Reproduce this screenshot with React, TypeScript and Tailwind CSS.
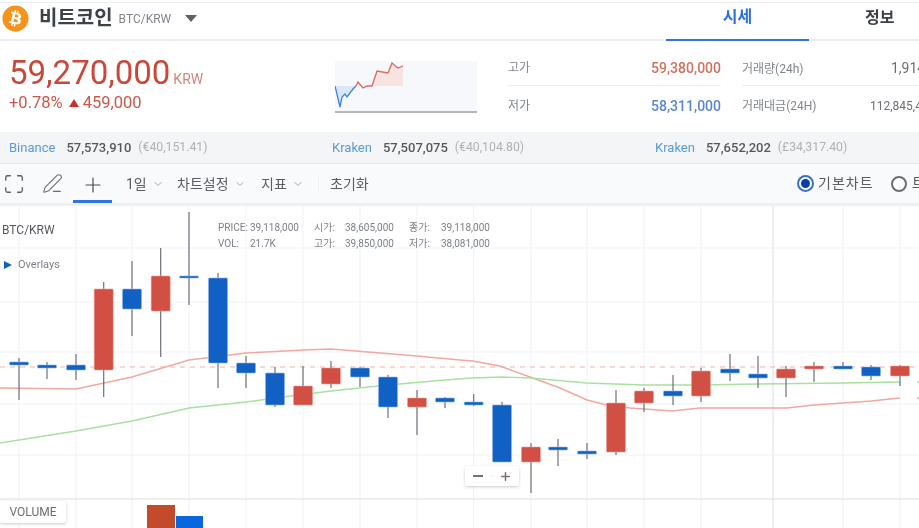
import { ChevronDown, Maximize, PenLine, Plus } from 'lucide-react';
import { FaBitcoin } from 'react-icons/fa';

const FONT = "font-['Roboto','Noto_Sans_CJK_KR',sans-serif]";

const RED = '#d14f43';
const BLUE = '#1160c4';

// x, bodyTop, bodyBottom, wickTop, wickBottom, up
const candles: [number, number, number, number, number, boolean][] = [
  [19, 362, 365, 358, 400, false],
  [47, 365, 368, 362, 379, false],
  [76, 365, 370, 354, 380, false],
  [103.7, 289, 370, 282, 397, true],
  [132, 289, 309, 261, 336, false],
  [160.7, 276, 311, 248, 357, true],
  [189, 276, 278, 212, 305, false],
  [218, 278, 363, 273, 388, false],
  [246, 363, 373, 356, 388, false],
  [275, 373, 405, 367, 407, false],
  [303, 386, 405, 366, 405, true],
  [331, 368, 384, 361, 388, true],
  [360, 368, 377, 367, 387, false],
  [388, 377, 407, 375, 418, false],
  [417, 398, 407, 390, 435, true],
  [445, 398, 402, 397, 408, false],
  [473.7, 402, 405, 394, 406, false],
  [502, 405, 462, 402, 462, false],
  [531, 447, 462, 443, 493, true],
  [558, 447, 450, 439, 466, false],
  [587, 451, 454, 443, 459, false],
  [616, 403, 452, 390, 455, true],
  [644, 391, 403, 388, 412, true],
  [673, 391, 396, 375, 405, false],
  [701, 371, 396, 368, 402, true],
  [730, 369, 373, 354, 381, false],
  [758, 374, 378, 356, 388, false],
  [786, 369, 378, 366, 397, true],
  [814, 366, 369, 362, 382, true],
  [843, 366, 369, 362, 369, false],
  [871, 367, 376, 365, 380, false],
  [900, 366, 376, 365, 386, true],
];

const gridX = [19, 76, 132, 189, 246, 303, 360, 417, 473.7, 531, 587, 644, 701, 843, 900];
const gridY = [248, 302, 352, 404, 455];

const redLine =
  '0,388 76,389 132,377 189,360 246,353 303,350 331,349 417,356 460,360 473,361 500,366 530,377 560,388 587,400 607,405 630,408 672,411 700,408 773,408 787,408 814,405 843,403 871,401 900,398';
const greenLine =
  '0,443 76,431 132,421 189,408 246,402 275,398 331,391 388,385 445,380 473,378 502,377 531,378 587,383 644,385 701,385 758,384 843,383 900,382';

const exchanges = [
  { name: 'Binance', price: '57,573,910', sub: '(€40,151.41)' },
  { name: 'Kraken', price: '57,507,075', sub: '(€40,104.80)' },
  { name: 'Kraken', price: '57,652,202', sub: '(£34,317.40)' },
];

const Header = () => (
  <div className="mt-[2px] flex h-[39px] items-stretch border-y border-b-2 border-[#eceef1] bg-white">
    <div className="flex items-center pb-[6px] pl-[2px]">
      <FaBitcoin className="h-[27px] w-[27px] text-[#f7931a]" />
      <span className="ml-[10px] text-[20px] font-bold text-[#3d4148]">비트코인</span>
      <span className="ml-[6px] mt-[2px] text-[12px] text-[#80858d]">BTC/KRW</span>
      <span className="ml-[14px] h-0 w-0 border-x-[6px] border-t-[7px] border-x-transparent border-t-[#5b6068]" />
    </div>
    <div className="ml-auto flex">
      <div className="-mb-[2px] flex w-[143px] items-center justify-center border-b-[2px] border-[#2f74e0] pb-[8px] text-[16px] font-bold text-[#2f6fd8]">
        시세
      </div>
      <div className="flex w-[110px] items-center pb-[6px] pl-[56px] text-[16px] font-bold text-[#3d4148]">
        정보
      </div>
    </div>
  </div>
);

const Spark = () => (
  <svg width="142" height="52" viewBox="335 61 142 52" className="mt-[20px] ml-[165px] shrink-0">
    <rect x="335" y="61" width="142" height="50" fill="#f7f8fb" />
    <polygon points="335,86 340,107 342,97 345,94 347,97 353,89 357,86" fill="#dbe7f8" />
    <polygon points="357,86 358,82 363,86 372,86 377,71 388,73 392,63 398,68 403,66 403,86" fill="#f7e3e0" />
    <polyline points="335,86 340,107 342,97 345,94 347,97 353,89 356,86" fill="none" stroke="#3b82e6" strokeWidth="1.3" />
    <polyline points="356,86 358,82 363,88 367,86 372,86 377,71 388,73 392,63 398,68 403,66" fill="none" stroke="#d9695c" strokeWidth="1.3" />
    <rect x="335" y="111" width="142" height="2" fill="#b4b6ba" />
  </svg>
);

const PriceRow = () => (
  <div className="flex h-[90px] bg-white">
    <div className="w-[170px] shrink-0 pl-[9px]">
      <div className="mt-[13px] flex items-baseline whitespace-nowrap">
        <span className="text-[33px] leading-[38px] text-[#c9483a]">59,270,000</span>
        <span className="ml-[3px] text-[14px] text-[#d2847a]">KRW</span>
      </div>
      <div className="mt-[1px] flex items-center whitespace-nowrap text-[16.5px] leading-[20px] text-[#c9584b]">
        +0.78%
        <span className="ml-[6px] mr-[4px] h-0 w-0 border-x-[5px] border-b-[8px] border-x-transparent border-b-[#c9302c]" />
        459,000
      </div>
    </div>
    <Spark />
    <div className="ml-[31px] w-[213px] shrink-0 text-[12px] text-[#80858d]">
      <div className="flex h-[45px] items-center justify-between border-b border-[#eceef3] pt-[11px]">
        <span className="-mt-[2px]">고가</span>
        <span className="text-[14px] font-medium text-[#d0705f]">59,380,000</span>
      </div>
      <div className="flex h-[40px] items-center justify-between">
        <span>저가</span>
        <span className="text-[14px] font-medium text-[#5b85d0]">58,311,000</span>
      </div>
    </div>
    <div className="ml-[21px] w-[177px] shrink-0 overflow-hidden whitespace-nowrap text-[12px] text-[#80858d]">
      <div className="flex h-[45px] items-center border-b border-[#eceef3] pt-[11px]">
        <span className="w-[149px] shrink-0">거래량(24h)</span>
        <span className="text-[14px] text-[#6a6e75]">1,914</span>
      </div>
      <div className="flex h-[40px] items-center">
        <span className="w-[128px] shrink-0">거래대금(24H)</span>
        <span className="text-[12px] text-[#6a6e75]">112,845,48</span>
      </div>
    </div>
  </div>
);

const ExchangeStrip = () => (
  <div className="mt-[1px] flex h-[32px] items-center border-b border-[#e4e6ea] bg-[#f4f5f7] pl-[9px] text-[13px]">
    {exchanges.map((e, i) => (
      <div key={i} className="flex w-[323px] shrink-0 items-center whitespace-nowrap">
        <span className="text-[#5a9bd4]">{e.name}</span>
        <span className="ml-[11px] font-medium text-[#55585e]">{e.price}</span>
        <span className="ml-[7px] text-[12.25px] text-[#aeb1b6]">{e.sub}</span>
      </div>
    ))}
  </div>
);

const Dropdown = ({ label, className }: { label: string; className: string }) => (
  <div className={`flex items-center whitespace-nowrap ${className}`}>
    {label}
    <ChevronDown className="ml-[5px] h-[12px] w-[12px] text-[#8a8f96]" strokeWidth={1.5} />
  </div>
);

const Toolbar = () => (
  <div className="flex h-[42px] items-stretch border-b-[3px] border-[#eef0f4] bg-[#f9fafc] text-[14px] text-[#5a5d64]">
    <div className="flex w-[28px] items-center justify-center">
      <Maximize className="h-[22px] w-[22px] text-[#5a5d64]" strokeWidth={1.4} />
    </div>
    <div className="flex w-[43px] items-center justify-center pl-[5px]">
      <PenLine className="h-[21px] w-[21px] text-[#6a6d74]" strokeWidth={1.2} />
    </div>
    <div className="ml-[2px] flex w-[39px] items-center justify-center border-b-[3px] border-[#2f74e0] pt-[5px]">
      <Plus className="h-[24px] w-[24px] text-[#4a4d54]" strokeWidth={1.2} />
    </div>
    <div className="ml-[14px] flex items-center pt-[1px]">
      <Dropdown label="1일" className="w-[51px]" />
      <Dropdown label="차트설정" className="w-[84px]" />
      <Dropdown label="지표" className="w-[57px]" />
      <span className="h-[14px] w-px bg-[#eceef1]" />
      <span className="ml-[11px] whitespace-nowrap">초기화</span>
    </div>
    <div className="ml-auto flex w-[122px] shrink-0 items-center overflow-hidden whitespace-nowrap">
      <span className="flex h-[17px] w-[17px] shrink-0 items-center justify-center rounded-full border-2 border-[#3b6fc4]">
        <span className="h-[9px] w-[9px] rounded-full bg-[#0a3fa8]" />
      </span>
      <span className="ml-[4px] w-[73px] shrink-0 tracking-[1px]">기본차트</span>
      <span className="h-[16px] w-[16px] shrink-0 rounded-full border-2 border-[#6a6d74] bg-white" />
      <span className="ml-[5px] tracking-[1px]">트레이딩뷰</span>
    </div>
  </div>
);

const ChartSvg = () => (
  <svg width="919" height="322" viewBox="0 206 919 322" className="block">
    {gridX.map((x) => (
      <line key={x} x1={x} x2={x} y1="206" y2="528" stroke="#f0f1f3" strokeWidth="1" />
    ))}
    <line x1="773" x2="773" y1="206" y2="528" stroke="#dcdee1" strokeWidth="1" />
    {gridY.map((y) => (
      <line key={y} x1="0" x2="919" y1={y} y2={y} stroke="#f0f1f3" strokeWidth="1" />
    ))}
    <line x1="0" x2="919" y1="499" y2="499" stroke="#dcdee1" strokeWidth="1.2" />
    <line x1="0" x2="919" y1="367" y2="367" stroke="#f4b2aa" strokeWidth="1.2" strokeDasharray="5 5" />
    <polyline points={redLine} fill="none" stroke="#f0a8a0" strokeWidth="1.4" />
    <polyline points={greenLine} fill="none" stroke="#a8e0a0" strokeWidth="1.4" />
    <line x1="917" x2="919" y1="398" y2="398" stroke="#f0a8a0" strokeWidth="1.4" />
    <line x1="917" x2="919" y1="382" y2="382" stroke="#a8e0a0" strokeWidth="1.4" />
    {candles.map(([x, top, bottom, wickTop, wickBottom, up]) => (
      <g key={x}>
        <line x1={x} x2={x} y1={wickTop} y2={wickBottom} stroke="#6b7078" strokeWidth="1.2" />
        <rect
          x={x - 9.5}
          y={top}
          width="19"
          height={bottom - top}
          rx="1"
          fill={up ? RED : BLUE}
          stroke={up ? '#eb9d94' : '#8ab4ea'}
          strokeWidth="0.6"
        />
      </g>
    ))}
    <rect x="147" y="505" width="28" height="23" fill="#c44a2c" />
    <rect x="176" y="516" width="27" height="12" fill="#0a66dc" />
  </svg>
);

const Chart = () => (
  <div className="relative h-[322px] overflow-hidden bg-white">
    <ChartSvg />
    <div className="absolute left-[2px] top-[15px] text-[12px] text-[#55585e]">BTC/KRW</div>
    <div className="absolute left-[218px] top-[15px] grid grid-cols-[32px_64px_31px_64px_32px_50px] gap-y-[3px] whitespace-nowrap text-[10px] leading-[13px] text-[#7c8087]">
      <span>PRICE:</span>
      <span>39,118,000</span>
      <span>시가:</span>
      <span>38,605,000</span>
      <span>종가:</span>
      <span>39,118,000</span>
      <span>VOL:</span>
      <span>21.7K</span>
      <span>고가:</span>
      <span>39,850,000</span>
      <span>저가:</span>
      <span>38,081,000</span>
    </div>
    <div className="absolute left-[4px] top-[51px] flex items-center text-[11px] text-[#7c8087]">
      <span className="mr-[6px] h-0 w-0 border-y-[4px] border-l-[8px] border-y-transparent border-l-[#1160c4]" />
      Overlays
    </div>
    <div className="absolute left-[465px] top-[260px] flex h-[20px] w-[54px] items-center rounded-[2px] bg-white text-[#6f7379] shadow-[0_1px_3px_rgba(0,0,0,0.2)]">
      <span className="flex w-[27px] items-center justify-center border-r border-[#e8e9ec]">
        <span className="h-[2px] w-[10px] bg-[#6f7379]" />
      </span>
      <span className="flex w-[27px] items-center justify-center">
        <Plus className="h-[13px] w-[13px]" strokeWidth={2.8} />
      </span>
    </div>
    <div className="absolute left-0 top-[295px] flex h-[22px] w-[66px] items-center justify-center rounded-[2px] bg-white text-[12px] text-[#6a6d74] shadow-[0_1px_3px_rgba(0,0,0,0.2)]">
      VOLUME
    </div>
  </div>
);

export default function App() {
  return (
    <div className={`h-[528px] w-[919px] overflow-hidden bg-white blur-[0.5px] ${FONT}`}>
      <Header />
      <PriceRow />
      <ExchangeStrip />
      <Toolbar />
      <Chart />
    </div>
  );
}
